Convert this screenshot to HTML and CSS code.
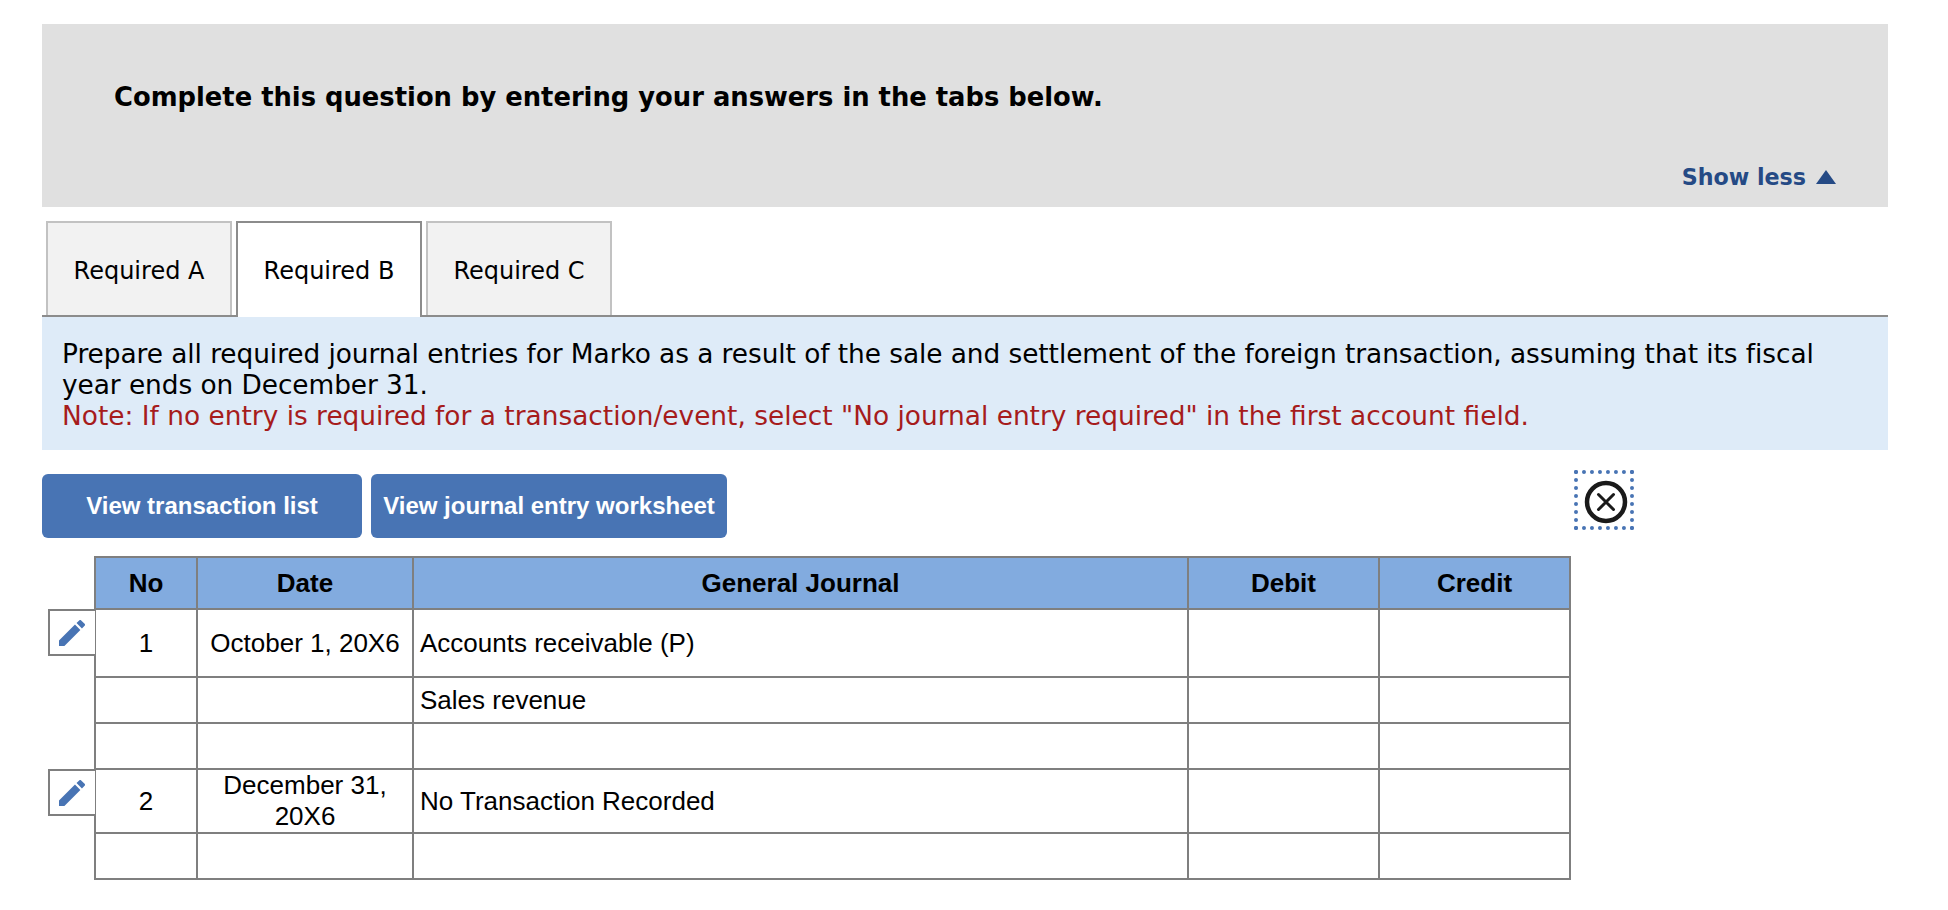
FILE: index.html
```html
<!DOCTYPE html>
<html lang="en">
<head>
    <meta charset="UTF-8">
    <title>Required B</title>
    <link rel="stylesheet" href="styles.css">
</head>
<body>
    <div class="page">
        <div class="prompt">
            <div class="prompt-title">Complete this question by entering your answers in the tabs below.</div>
            <div class="prompt-toggle">
                <span>Show less</span>
                <svg class="toggle-arrow" viewBox="0 0 20 14"><polygon points="10,0 20,14 0,14"/></svg>
            </div>
        </div>

        <div class="tabs">
            <div class="tab">Required A</div>
            <div class="tab active">Required B</div>
            <div class="tab">Required C</div>
        </div>

        <div class="instructions">
            <p class="task">Prepare all required journal entries for Marko as a result of the sale and settlement of the foreign transaction, assuming that its fiscal year ends on December 31.</p>
            <p class="note">Note: If no entry is required for a transaction/event, select "No journal entry required" in the first account field.</p>
        </div>

        <div class="toolbar">
            <button class="btn btn-list">View transaction list</button>
            <button class="btn btn-worksheet">View journal entry worksheet</button>
            <div class="close-box">
                <svg viewBox="0 0 48 48" width="48" height="48">
                    <circle cx="26" cy="26" r="19" fill="none" stroke="#1a1a1a" stroke-width="4.5"/>
                    <path d="M18.5 18.5l15 15M33.5 18.5l-15 15" stroke="#1a1a1a" stroke-width="3" stroke-linecap="round"/>
                </svg>
            </div>
        </div>

        <table class="journal">
            <colgroup>
                <col class="col-no"><col class="col-date"><col class="col-account"><col class="col-amount"><col class="col-amount">
            </colgroup>
            <thead>
                <tr>
                    <th>No</th><th>Date</th><th>General Journal</th><th>Debit</th><th>Credit</th>
                </tr>
            </thead>
            <tbody>
                <tr class="row-first">
                    <td class="center has-edit">
                        <span class="edit-btn">
                            <svg viewBox="3 3 18 18" width="26" height="26"><path d="M3 17.25V21h3.75L17.81 9.94l-3.75-3.75L3 17.25zM20.71 7.04a.996.996 0 0 0 0-1.41l-2.34-2.34a.996.996 0 0 0-1.41 0l-1.83 1.83 3.75 3.75 1.83-1.83z"/></svg>
                        </span>
                        1
                    </td>
                    <td class="center">October 1, 20X6</td>
                    <td>Accounts receivable (P)</td><td></td><td></td>
                </tr>
                <tr class="row-plain">
                    <td></td><td></td><td>Sales revenue</td><td></td><td></td>
                </tr>
                <tr class="row-plain">
                    <td></td><td></td><td></td><td></td><td></td>
                </tr>
                <tr class="row-tall">
                    <td class="center has-edit">
                        <span class="edit-btn">
                            <svg viewBox="3 3 18 18" width="26" height="26"><path d="M3 17.25V21h3.75L17.81 9.94l-3.75-3.75L3 17.25zM20.71 7.04a.996.996 0 0 0 0-1.41l-2.34-2.34a.996.996 0 0 0-1.41 0l-1.83 1.83 3.75 3.75 1.83-1.83z"/></svg>
                        </span>
                        2
                    </td>
                    <td class="center">December 31, 20X6</td>
                    <td>No Transaction Recorded</td><td></td><td></td>
                </tr>
                <tr class="row-plain">
                    <td></td><td></td><td></td><td></td><td></td>
                </tr>
            </tbody>
        </table>
    </div>
</body>
</html>
```

FILE: styles.css
```css
body {
    margin: 0;
    background: #fff;
    color: #000;
    font-family: "DejaVu Sans", Verdana, sans-serif;
}
.page {
    width: 1846px;
    padding: 24px 0 30px 42px;
}
.prompt {
    background: #e0e0e0;
    height: 183px;
    padding: 57px 52px 0 72px;
    box-sizing: border-box;
    display: flex;
    flex-direction: column;
}
.prompt-title {
    font-size: 25.8px;
    font-weight: bold;
    line-height: 32px;
}
.prompt-toggle {
    margin-top: auto;
    margin-bottom: 15px;
    display: flex;
    justify-content: flex-end;
    align-items: center;
    gap: 10px;
    color: #254a85;
    font-size: 22.2px;
    font-weight: bold;
    line-height: 30px;
}
.toggle-arrow {
    width: 20px;
    height: 14px;
    fill: #254a85;
}
.tabs {
    display: flex;
    gap: 4px;
    margin-top: 14px;
    padding-left: 4px;
    border-bottom: 2px solid #8c8c8c;
    box-sizing: border-box;
    height: 96px;
}
.tab {
    width: 186px;
    height: 94px;
    box-sizing: border-box;
    background: #f2f2f2;
    border: 2px solid #c2c2c2;
    border-bottom: none;
    padding-top: 4px;
    font-size: 24px;
    display: flex;
    align-items: center;
    justify-content: center;
}
.tab.active {
    background: #fff;
    border-color: #8c8c8c;
    height: 96px;
    padding-top: 2px;
}
.instructions {
    background: #deebf8;
    height: 133px;
    box-sizing: border-box;
    padding: 21px 20px 0;
    font-size: 26.4px;
    line-height: 31px;
}
.instructions p {
    margin: 0;
}
.task {
    letter-spacing: -0.07px;
}
.note {
    color: #a61c1c;
}
.toolbar {
    display: flex;
    gap: 9px;
    margin-top: 24px;
    height: 64px;
    align-items: flex-start;
}
.btn {
    height: 64px;
    background: #4874b4;
    color: #fff;
    border: none;
    border-radius: 6px;
    padding: 0;
    font-family: "Liberation Sans", Arial, sans-serif;
    font-size: 24px;
    font-weight: bold;
}
.btn-list {
    width: 320px;
}
.btn-worksheet {
    width: 356px;
}
.close-box {
    width: 60px;
    height: 60px;
    box-sizing: border-box;
    margin-left: 838px;
    margin-top: -4px;
    border: 4px dotted #4874b4;
    display: flex;
    align-items: center;
    justify-content: center;
}
.journal {
    margin: 18px 0 0 52px;
    width: 1477px;
    table-layout: fixed;
    border-collapse: collapse;
    font-family: "Liberation Sans", Arial, sans-serif;
    font-size: 26px;
    line-height: 31px;
}
.col-no { width: 102px; }
.col-date { width: 216px; }
.col-account { width: 775px; }
.col-amount { width: 191px; }
.journal th, .journal td {
    border: 2px solid #7f7f7f;
    padding: 0 6px;
}
.journal th {
    background: #82abdf;
    height: 50px;
    font-size: 26px;
}
.row-first td { height: 66px; }
.row-plain td { height: 44px; }
.row-tall td { height: 61px; }
.center { text-align: center; }
.has-edit { position: relative; }
.edit-btn {
    position: absolute;
    left: -48px;
    top: -1px;
    width: 47px;
    height: 47px;
    box-sizing: border-box;
    background: #fff;
    border: 2px solid #7f7f7f;
    border-right: none;
    display: flex;
    align-items: center;
    justify-content: center;
    padding-right: 2px;
}
.edit-btn svg {
    fill: #4874b4;
}
```
